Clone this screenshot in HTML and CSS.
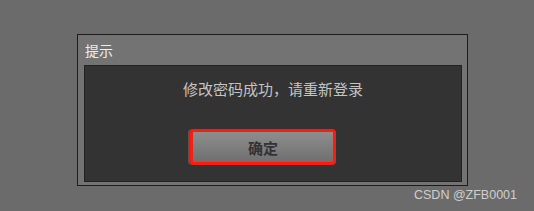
FILE: index.html
```html
<!DOCTYPE html>
<html lang="zh-CN">
<head>
    <meta charset="UTF-8">
    <title>提示</title>
    <link rel="stylesheet" href="styles.css">
</head>
<body>

    <!-- Dialog -->
    <div class="dialog">
        <div class="dialog-title">提示</div>
        <div class="dialog-panel">
            <p class="message">修改密码成功，请重新登录</p>
            <button class="ok-button">确定</button>
        </div>
    </div>

    <!-- Watermark -->
    <div class="watermark">CSDN @ZFB0001</div>

</body>
</html>
```

FILE: styles.css
```css
/* General Body Styling */
body {
    margin: 0;
    padding: 34px 0 0 77px;
    background-color: #6b6b6b;
    font-family: "Noto Sans CJK SC", "Liberation Sans", sans-serif;
    height: 211px;
    box-sizing: border-box;
    position: relative;
    overflow: hidden;
}

/* Dialog */
.dialog {
    width: 391px;
    height: 152px;
    box-sizing: border-box;
    border: 1px solid #1c1c1c;
    background-color: #737373;
    padding: 0 5px 3px 6px;
    display: flex;
    flex-direction: column;
}

.dialog-title {
    height: 30px;
    line-height: 30px;
    padding-left: 1px;
    font-size: 14px;
    color: #eeeeee;
}

/* Panel */
.dialog-panel {
    flex: 1;
    background-color: #333333;
    border: 1px solid #222222;
    display: flex;
    flex-direction: column;
    align-items: center;
}

.message {
    margin: 12px 0 0 0;
    font-size: 15px;
    line-height: 22px;
    color: #c4c4c4;
}

/* OK Button */
.ok-button {
    align-self: flex-start;
    margin: 29px 0 0 105px;
    width: 146px;
    height: 36px;
    border: 3px solid #ff1a0f;
    border-radius: 4px;
    background: linear-gradient(#8e8e8e, #6f6f6f);
    color: #333333;
    font-family: "Noto Sans CJK SC", sans-serif;
    font-size: 15px;
    font-weight: bold;
    box-shadow: -2px 0 0 #555555;
    cursor: pointer;
}

/* Watermark */
.watermark {
    position: absolute;
    right: 17px;
    bottom: 9px;
    font-family: "Liberation Sans", Arial, sans-serif;
    font-size: 12.5px;
    color: #cfcfcf;
}
```
